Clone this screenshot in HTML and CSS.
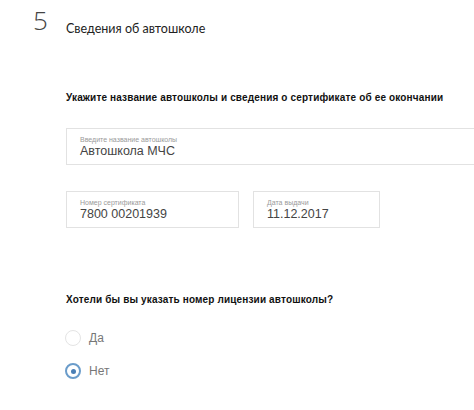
FILE: index.html
```html
<!DOCTYPE html>
<html>
<head>
  <meta charset="utf-8">
  <title>Сведения об автошколе</title>
  <link rel="stylesheet" href="styles.css">
</head>
<body>
  <div class="step">
    <div class="step-num">5</div>
    <h2 class="step-title">Сведения об автошколе</h2>
  </div>

  <div class="section">
    <p class="question">Укажите название автошколы и сведения о сертификате об ее окончании</p>

    <div class="field field-wide">
      <span class="field-label">Введите название автошколы</span>
      <span class="field-value">Автошкола МЧС</span>
    </div>

    <div class="field-row">
      <div class="field field-cert">
        <span class="field-label">Номер сертификата</span>
        <span class="field-value">7800 00201939</span>
      </div>
      <div class="field field-date">
        <span class="field-label">Дата выдачи</span>
        <span class="field-value">11.12.2017</span>
      </div>
    </div>
  </div>

  <div class="section section-license">
    <p class="question">Хотели бы вы указать номер лицензии автошколы?</p>
    <label class="radio">
      <span class="radio-mark"></span>
      <span class="radio-text">Да</span>
    </label>
    <label class="radio checked">
      <span class="radio-mark"></span>
      <span class="radio-text">Нет</span>
    </label>
  </div>
</body>
</html>
```

FILE: styles.css
```css
body {
  margin: 0;
  background-color: #fff;
  font-family: "Liberation Sans", Arial, sans-serif;
  color: #333;
  overflow: hidden;
}

.step {
  display: flex;
  align-items: flex-start;
  padding: 5px 0 0 33px;
  height: 61px;
}

.step-num {
  font-family: "Open Sans", sans-serif;
  font-weight: 300;
  font-size: 26px;
  line-height: 30px;
  color: #444;
  width: 33px;
}

.step-title {
  margin: 16px 0 0;
  font-family: Lato, sans-serif;
  font-weight: 400;
  font-size: 12.5px;
  line-height: 16px;
  color: #222;
}

.section {
  padding-left: 66px;
}

.question {
  margin: 25px 0 0;
  font-family: "Liberation Sans", Arial, sans-serif;
  font-weight: bold;
  font-size: 10px;
  line-height: 14px;
  letter-spacing: 0.15px;
  white-space: nowrap;
  color: #111;
}

.field {
  box-sizing: border-box;
  height: 37px;
  border: 1px solid #e2e2e2;
  padding: 6px 13px 0;
  display: flex;
  flex-direction: column;
}

.field-wide {
  margin-top: 23px;
  width: 430px;
}

.field-label {
  font-size: 7px;
  line-height: 9px;
  color: #9a9a9a;
}

.field-value {
  font-size: 12.5px;
  line-height: 15px;
  color: #444;
}

.field-row {
  display: flex;
  gap: 14px;
  margin-top: 26px;
}

.field-cert {
  width: 173px;
}

.field-date {
  width: 127px;
}

.section-license {
  margin-top: 65px;
}

.radio {
  display: flex;
  align-items: center;
  height: 16px;
  margin-top: 23px;
}

.radio + .radio {
  margin-top: 17px;
}

.radio-mark {
  box-sizing: border-box;
  width: 16px;
  height: 16px;
  border: 1.5px solid #e4e4e4;
  border-radius: 50%;
  margin-left: -1px;
  margin-right: 8px;
  display: flex;
  align-items: center;
  justify-content: center;
}

.radio.checked .radio-mark {
  border: 2px solid #6a9cca;
}

.radio.checked .radio-mark::after {
  content: "";
  width: 5px;
  height: 5px;
  border-radius: 50%;
  background-color: #4a7fb5;
}

.radio-text {
  font-size: 12px;
  color: #777;
}
```
